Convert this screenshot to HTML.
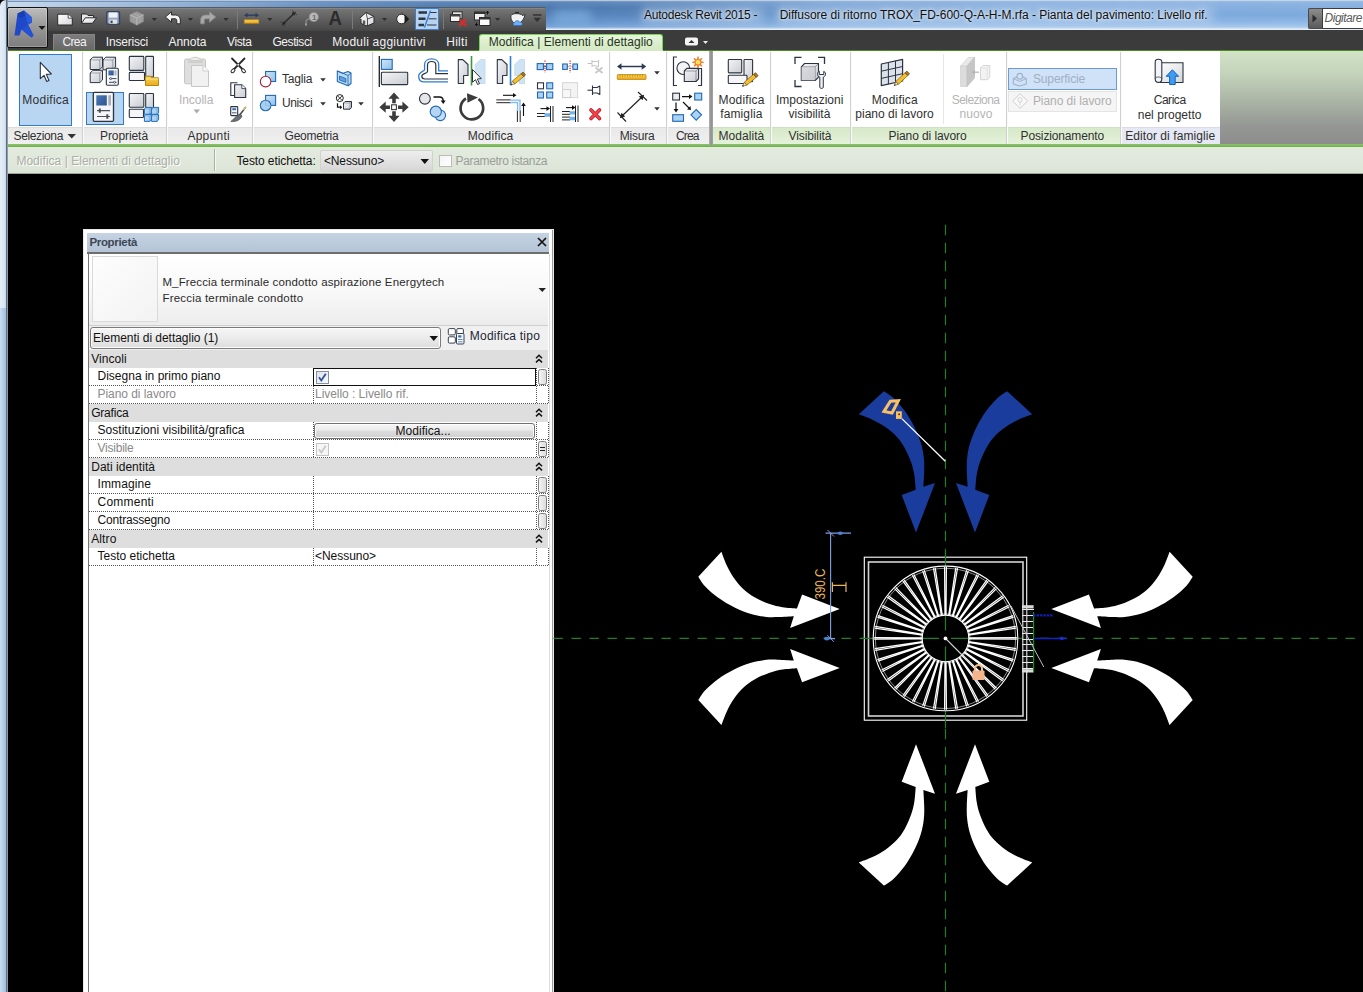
<!DOCTYPE html>
<html lang="it"><head><meta charset="utf-8"><title>Autodesk Revit 2015</title>
<style>
html,body{margin:0;padding:0;background:#000;}
body{width:1363px;height:992px;position:relative;overflow:hidden;font-family:"Liberation Sans",sans-serif;font-size:12px;}
div,span.t,svg.a{position:absolute;box-sizing:border-box;}
span.t{white-space:pre;line-height:16px;height:16px;}
</style></head>
<body>
<div style="left:0px;top:0px;width:1363px;height:31px;background:linear-gradient(180deg,#dde8f3 0,#7c98bd 1.2px,#5c86ba 2.5px,#4d79ae 8px,#5583ba 15px,#6694cb 22px,#7aa6da 27px,#c5daf0 28.7px,#e8f0f8 29.6px,#3b3b3b 30.3px);"></div><div style="left:546px;top:0px;width:817px;height:30.3px;background:linear-gradient(180deg,#dde8f3 0,#9dbbe0 1.2px,#8eb5e3 3px,#7eaadc 15px,#8fb8e6 22px,#a9c9ec 27px,#d5e4f5 28.7px,#e8f0f8 29.6px);-webkit-mask-image:linear-gradient(90deg,rgba(0,0,0,0) 0,rgba(0,0,0,.12) 90px,rgba(0,0,0,.75) 280px,rgba(0,0,0,.95) 480px,#000 100%);mask-image:linear-gradient(90deg,rgba(0,0,0,0) 0,rgba(0,0,0,.12) 90px,rgba(0,0,0,.75) 280px,rgba(0,0,0,.95) 480px,#000 100%);"></div><div style="left:0px;top:1.5px;width:546px;height:6px;background:linear-gradient(90deg,rgba(220,234,248,.85) 0,rgba(200,220,242,.6) 150px,rgba(160,190,225,.25) 330px,rgba(120,160,210,0) 450px);"></div><div style="left:552px;top:10px;width:40px;height:14px;background:rgba(140,190,235,.55);filter:blur(5px);border-radius:8px;"></div><div style="left:640px;top:6px;width:125px;height:19px;background:rgba(225,236,250,.28);filter:blur(5px);border-radius:8px;"></div><div style="left:775px;top:6px;width:440px;height:19px;background:rgba(225,236,250,.28);filter:blur(5px);border-radius:8px;"></div><div style="left:0px;top:0px;width:8px;height:992px;background:linear-gradient(90deg,#c9ddf2 0,#b4cde8 3px,#a6c0dd 5.5px,#5f6f82 6.5px,#8f9aa8 7.5px,#222 8px);"></div><div style="left:0px;top:0px;width:6px;height:308px;background:linear-gradient(90deg,#e4eef8 0,#dbe7f4 4px,#c6d6e8 6px);"></div><svg class="a" style="left:0;top:0" width="10" height="10"><path d="M0 0H6A6 6 0 0 0 0 6Z" fill="#0a0a0a"/></svg><div style="left:8px;top:30px;width:1355px;height:21px;background:#3b3b3b;"></div><div style="left:8px;top:7px;width:538px;height:24px;background:linear-gradient(180deg,#8c8c8c 0,#747474 1.5px,#6a6a6a 6px,#595959 14px,#4c4c4c 21px,#454545 100%);border-radius:0 2px 0 0;border-top:1px solid #565b63;"></div><div style="left:7px;top:7px;width:41px;height:41px;background:linear-gradient(180deg,#bdbdbd 0,#9a9a9a 45%,#7d7d7d 100%);border:1.5px solid #111;border-radius:2px;box-shadow:inset 0 0 0 1px rgba(255,255,255,.25);"></div><svg class="a" style="left:8px;top:8px" width="40" height="40" viewBox="0 0 40 40">
<path d="M9.5 5.5 L16 2.5 L23.5 9 L24 14.5 L20 16.5 L25.5 27.5 L23.5 29.5 L13.5 21.5 L11.5 27.5 L6.5 27.5 Z" fill="#1f49c8"/>
<path d="M9.5 5.500 L16 2.5 L17.500 8 L12 10 Z" fill="#1b3fb0"/>
<path d="M16 2.5 L23.5 9 L24 14.5 L20 16.500 L17.500 8Z" fill="#2a5ae0"/>
<path d="M13.500 21.5 L20 16.500 L25.500 27.5 L23.500 29.5Z" fill="#2352d6"/>
<path d="M30.5 18 L37.5 18 L34 22 Z" fill="#1a1a1a"/>
</svg><div style="left:236.5px;top:10px;width:1px;height:19px;background:#7a7a7a;"></div><div style="left:351.5px;top:10px;width:1px;height:19px;background:#7a7a7a;"></div><div style="left:442.5px;top:10px;width:1px;height:19px;background:#7a7a7a;"></div><div style="left:415px;top:8px;width:24px;height:22px;background:#b7d3f0;border:1px solid #3d7fc8;"></div><div style="left:53px;top:34px;width:42px;height:17px;background:linear-gradient(180deg,#7c7c7c,#666);border:1px solid #858585;border-bottom:none;"></div><span class="t" style="left:62.4px;top:34.0px;font-size:12px;color:#f2f2f2;letter-spacing:-0.60px;">Crea</span><span class="t" style="left:105.8px;top:34.0px;font-size:12px;color:#f2f2f2;letter-spacing:-0.20px;">Inserisci</span><span class="t" style="left:168.4px;top:34.0px;font-size:12px;color:#f2f2f2;letter-spacing:0.01px;">Annota</span><span class="t" style="left:227px;top:34.0px;font-size:12px;color:#f2f2f2;letter-spacing:-0.39px;">Vista</span><span class="t" style="left:272.4px;top:34.0px;font-size:12px;color:#f2f2f2;letter-spacing:-0.41px;">Gestisci</span><span class="t" style="left:332.3px;top:34.0px;font-size:12px;color:#f2f2f2;letter-spacing:0.23px;">Moduli aggiuntivi</span><span class="t" style="left:446.2px;top:34.0px;font-size:12px;color:#f2f2f2;letter-spacing:0.28px;">Hilti</span><div style="left:478.5px;top:33.5px;width:184.5px;height:18px;background:linear-gradient(180deg,#e9f5df 0,#d9ecc9 60%,#d3e9c1 100%);border:1.5px solid #74d653;border-bottom:none;border-radius:3px 3px 0 0;"></div><span class="t" style="left:488.7px;top:34.0px;font-size:12px;color:#26331f;letter-spacing:0.05px;">Modifica | Elementi di dettaglio</span><svg class="a" style="left:684px;top:36px" width="26" height="12"><rect x="1" y="1.5" width="13" height="8" rx="2" fill="#f4f4f4"/><path d="M4.500 7 L7.500 4 L10.500 7Z" fill="#333"/><path d="M19 5 L24 5 L21.500 8Z" fill="#eee"/></svg><div style="left:8px;top:49.5px;width:1355px;height:2px;background:#4c8a22;"></div><div style="left:478.5px;top:49.5px;width:184.5px;height:2px;background:#d3e9c1;"></div><div style="left:8px;top:51px;width:1212px;height:94px;background:#fff;"></div><div style="left:1220px;top:51px;width:143px;height:94px;background:linear-gradient(180deg,#d2e3c8 0,#c3d2ba 25%,#a9b3a4 55%,#949794 80%,#8c8c8c 100%);"></div><div style="left:8px;top:127px;width:701px;height:18px;background:linear-gradient(180deg,#e9e9e9,#f0f0f0);border-top:1px solid #dcdcdc;"></div><div style="left:712.5px;top:127px;width:407px;height:18px;background:linear-gradient(180deg,#d6e9c8,#e6f2dc);border-top:1px solid #cfe0c2;"></div><div style="left:1119.5px;top:127px;width:100.5px;height:18px;background:#e6e8f3;border-top:1px solid #d9dbe8;"></div><div style="left:8px;top:144px;width:1355px;height:2.5px;background:linear-gradient(180deg,#8cc46c,#6fb04a);"></div><div style="left:82px;top:52px;width:1px;height:92px;background:#d0d0d0;"></div><div style="left:83px;top:52px;width:1px;height:92px;background:#fafafa;"></div><div style="left:165.5px;top:52px;width:1px;height:92px;background:#d0d0d0;"></div><div style="left:166.5px;top:52px;width:1px;height:92px;background:#fafafa;"></div><div style="left:252px;top:52px;width:1px;height:92px;background:#d0d0d0;"></div><div style="left:253px;top:52px;width:1px;height:92px;background:#fafafa;"></div><div style="left:371.5px;top:52px;width:1px;height:92px;background:#d0d0d0;"></div><div style="left:372.5px;top:52px;width:1px;height:92px;background:#fafafa;"></div><div style="left:609px;top:52px;width:1px;height:92px;background:#d0d0d0;"></div><div style="left:610px;top:52px;width:1px;height:92px;background:#fafafa;"></div><div style="left:665.5px;top:52px;width:1px;height:92px;background:#d0d0d0;"></div><div style="left:666.5px;top:52px;width:1px;height:92px;background:#fafafa;"></div><div style="left:770px;top:52px;width:1px;height:92px;background:#d0d0d0;"></div><div style="left:771px;top:52px;width:1px;height:92px;background:#fafafa;"></div><div style="left:849.5px;top:52px;width:1px;height:92px;background:#d0d0d0;"></div><div style="left:850.5px;top:52px;width:1px;height:92px;background:#fafafa;"></div><div style="left:1005.5px;top:52px;width:1px;height:92px;background:#d0d0d0;"></div><div style="left:1006.5px;top:52px;width:1px;height:92px;background:#fafafa;"></div><div style="left:1119.5px;top:52px;width:1px;height:92px;background:#d0d0d0;"></div><div style="left:1120.5px;top:52px;width:1px;height:92px;background:#fafafa;"></div><div style="left:942.5px;top:54px;width:1px;height:70px;background:#e6e6e6;"></div><div style="left:709px;top:51px;width:3.5px;height:94px;background:linear-gradient(90deg,#b5b5b5,#8f8f8f 50%,#a5a5a5);"></div><div style="left:19px;top:54px;width:53px;height:71.5px;background:#b8d5f2;border:1px solid #2f7acb;"></div><span class="t" style="left:22.3px;top:92.0px;font-size:12px;color:#303030;letter-spacing:0.25px;">Modifica</span><span class="t" style="left:13.5px;top:127.8px;font-size:12px;color:#303030;letter-spacing:-0.36px;">Seleziona</span><svg class="a" style="left:66px;top:132px" width="12" height="8"><path d="M1.5 2 L10 2 L5.700 6.500Z" fill="#333"/></svg><span class="t" style="left:100px;top:127.8px;font-size:12px;color:#303030;letter-spacing:-0.08px;">Proprietà</span><span class="t" style="left:187.4px;top:127.8px;font-size:12px;color:#303030;letter-spacing:0.26px;">Appunti</span><span class="t" style="left:284.6px;top:127.8px;font-size:12px;color:#303030;letter-spacing:-0.25px;">Geometria</span><span class="t" style="left:467.7px;top:127.8px;font-size:12px;color:#303030;letter-spacing:0.13px;">Modifica</span><span class="t" style="left:619.8px;top:127.8px;font-size:12px;color:#303030;letter-spacing:-0.24px;">Misura</span><span class="t" style="left:675.9px;top:127.8px;font-size:12px;color:#303030;letter-spacing:-0.83px;">Crea</span><span class="t" style="left:718.5px;top:127.8px;font-size:12px;color:#303030;letter-spacing:0.06px;">Modalità</span><span class="t" style="left:788.6px;top:127.8px;font-size:12px;color:#303030;letter-spacing:-0.12px;">Visibilità</span><span class="t" style="left:888.5px;top:127.8px;font-size:12px;color:#303030;letter-spacing:-0.09px;">Piano di lavoro</span><span class="t" style="left:1020.6px;top:127.8px;font-size:12px;color:#303030;letter-spacing:-0.14px;">Posizionamento</span><span class="t" style="left:1125.2px;top:127.8px;font-size:12px;color:#303030;letter-spacing:0.07px;">Editor di famiglie</span><div style="left:86px;top:91.5px;width:38px;height:33.5px;background:#b8d5f2;border:1px solid #2f7acb;"></div><span class="t" style="left:178.9px;top:92.0px;font-size:12px;color:#b4b4b4;letter-spacing:-0.04px;">Incolla</span><svg class="a" style="left:192px;top:108px" width="10" height="7"><path d="M1.500 1.500 L8 1.500 L4.700 5.500Z" fill="#aaa"/></svg><span class="t" style="left:281.9px;top:71.0px;font-size:12px;color:#303030;letter-spacing:-0.18px;">Taglia</span><span class="t" style="left:281.9px;top:94.8px;font-size:12px;color:#303030;letter-spacing:-0.40px;">Unisci</span><svg class="a" style="left:319.3px;top:77.0px" width="8" height="6"><path d="M1.200 1.200 L6.800 1.200 L4 4.500Z" fill="#333"/></svg><svg class="a" style="left:319.3px;top:100.5px" width="8" height="6"><path d="M1.200 1.200 L6.800 1.200 L4 4.500Z" fill="#333"/></svg><svg class="a" style="left:357.4px;top:100.5px" width="8" height="6"><path d="M1.200 1.200 L6.800 1.200 L4 4.500Z" fill="#333"/></svg><svg class="a" style="left:652.8px;top:70.0px" width="8" height="6"><path d="M1.200 1.200 L6.800 1.200 L4 4.500Z" fill="#333"/></svg><svg class="a" style="left:652.8px;top:106.0px" width="8" height="6"><path d="M1.200 1.200 L6.800 1.200 L4 4.500Z" fill="#333"/></svg><span class="t" style="left:718.5px;top:91.5px;font-size:12px;color:#303030;letter-spacing:0.18px;">Modifica</span><span class="t" style="left:720.2px;top:106.3px;font-size:12px;color:#303030;letter-spacing:0.12px;">famiglia</span><span class="t" style="left:776px;top:91.5px;font-size:12px;color:#303030;">Impostazioni</span><span class="t" style="left:788.6px;top:106.3px;font-size:12px;color:#303030;letter-spacing:-0.03px;">visibilità</span><span class="t" style="left:871.7px;top:91.5px;font-size:12px;color:#303030;letter-spacing:0.19px;">Modifica</span><span class="t" style="left:855.3px;top:106.3px;font-size:12px;color:#303030;letter-spacing:0.02px;">piano di lavoro</span><span class="t" style="left:951.8px;top:91.5px;font-size:12px;color:#b4b4b4;letter-spacing:-0.57px;">Seleziona</span><span class="t" style="left:959.6px;top:106.3px;font-size:12px;color:#b4b4b4;letter-spacing:0.02px;">nuovo</span><div style="left:1008px;top:68px;width:109px;height:22px;background:#cfe2f8;border:1px solid #6a9bd8;"></div><div style="left:1008px;top:91px;width:109px;height:21px;background:#f5f5f5;border:1px solid #e4e4e4;"></div><span class="t" style="left:1032.9px;top:70.7px;font-size:12px;color:#9fb0c4;letter-spacing:-0.11px;">Superficie</span><span class="t" style="left:1032.9px;top:93.0px;font-size:12px;color:#b0b0b0;letter-spacing:-0.05px;">Piano di lavoro</span><span class="t" style="left:1153.7px;top:92.0px;font-size:12px;color:#303030;letter-spacing:-0.46px;">Carica</span><span class="t" style="left:1137.7px;top:106.6px;font-size:12px;color:#303030;letter-spacing:0.04px;">nel progetto</span><div style="left:8px;top:146.5px;width:1355px;height:27px;background:linear-gradient(180deg,#e3eade 0,#dde5d8 100%);border-bottom:1px solid #9aa595;"></div><span class="t" style="left:16.4px;top:152.8px;font-size:12px;color:#a9aea6;letter-spacing:0.03px;text-shadow:1px 1px 0 #fff;">Modifica | Elementi di dettaglio</span><div style="left:214px;top:149px;width:1px;height:22px;background:#a9b0a5;"></div><div style="left:215px;top:149px;width:1px;height:22px;background:#f6f8f4;"></div><span class="t" style="left:236.4px;top:152.6px;font-size:12px;color:#111;letter-spacing:-0.09px;">Testo etichetta:</span><div style="left:319.5px;top:149.5px;width:113px;height:22.5px;background:linear-gradient(180deg,#eeeeee,#e0e0e0 60%,#d6d6d6);border:1px solid #cfd3cc;border-radius:2px;"></div><span class="t" style="left:324px;top:152.6px;font-size:12px;color:#111;letter-spacing:-0.15px;">&lt;Nessuno&gt;</span><svg class="a" style="left:419.500px;top:157.5px" width="10" height="7"><path d="M0.500 1 L9 1 L4.750 6Z" fill="#111"/></svg><div style="left:439px;top:154.5px;width:12.5px;height:12.5px;background:linear-gradient(135deg,#f4f4f4,#fff);border:1px solid #b9bdb6;"></div><span class="t" style="left:455.6px;top:152.6px;font-size:12px;color:#9a9f97;letter-spacing:-0.34px;">Parametro istanza</span><span class="t" style="left:643.9px;top:6.6px;font-size:12px;color:#101010;letter-spacing:-0.22px;text-shadow:0 0 6px rgba(255,255,255,.9),0 0 3px rgba(255,255,255,.7);">Autodesk Revit 2015 -</span><span class="t" style="left:779.7px;top:6.6px;font-size:12px;color:#101010;letter-spacing:-0.03px;text-shadow:0 0 6px rgba(255,255,255,.9),0 0 3px rgba(255,255,255,.7);">Diffusore di ritorno TROX_FD-600-Q-A-H-M.rfa - Pianta del pavimento: Livello rif.</span><div style="left:1307.5px;top:8px;width:14px;height:21px;background:linear-gradient(180deg,#8c8c8c,#5a5a5a);border:1px solid #4a4a4a;border-right:none;border-radius:2px 0 0 2px;"></div><svg class="a" style="left:1311px;top:13px" width="8" height="11"><path d="M1.500 1.500 L6 5.500 L1.500 9.500Z" fill="#2a2a2a"/></svg><div style="left:1321.5px;top:8px;width:45px;height:21px;background:#fff;border:1px solid #3c3c3c;"></div><span class="t" style="left:1324.6px;top:10.2px;font-size:12px;color:#5a5a5a;letter-spacing:-0.52px;font-style:italic;">Digitare</span><div style="left:8px;top:173.5px;width:1355px;height:819px;background:#000;"></div><div style="left:82.5px;top:229px;width:471.5px;height:770px;background:#fff;border:1px solid #e8e8e8;box-shadow:inset -1px 0 0 #9a9a9a;"></div><div style="left:86.5px;top:233px;width:462.5px;height:19.5px;background:linear-gradient(180deg,#c5d3e2 0,#bccbdc 50%,#b3c4d6 100%);"></div><div style="left:86.5px;top:252px;width:462.5px;height:1.5px;background:#6e6e6e;"></div><div style="left:87.7px;top:253px;width:1.4px;height:740px;background:#767676;"></div><div style="left:548.5px;top:253.5px;width:1px;height:740px;background:#dcdcdc;"></div><span class="t" style="left:89.4px;top:234.0px;font-size:11.5px;color:#3b4756;letter-spacing:-0.32px;font-weight:bold;">Proprietà</span><svg class="a" style="left:536px;top:236px" width="12" height="12"><path d="M2 2 L10 10 M10 2 L2 10" stroke="#111" stroke-width="1.700" fill="none"/></svg><div style="left:89.1px;top:253.5px;width:459.4px;height:72px;background:linear-gradient(180deg,#ffffff 0,#f7f7f7 60%,#ececec 100%);border-bottom:1px solid #cfcfcf;"></div><div style="left:92px;top:256px;width:66px;height:65.5px;background:linear-gradient(135deg,#fdfdfd,#f3f3f3);border:1px solid #dadada;"></div><span class="t" style="left:162.4px;top:273.9px;font-size:11.5px;color:#2a2a2a;letter-spacing:0.14px;">M_Freccia terminale condotto aspirazione Energytech</span><span class="t" style="left:162.4px;top:290.0px;font-size:11.5px;color:#2a2a2a;letter-spacing:0.21px;">Freccia terminale condotto</span><svg class="a" style="left:538px;top:287px" width="9" height="6"><path d="M0.500 1 L8 1 L4.250 5Z" fill="#222"/></svg><div style="left:89.1px;top:325.5px;width:459.4px;height:24.5px;background:#f0f0f0;"></div><div style="left:89.6px;top:326.5px;width:351.9px;height:22px;background:linear-gradient(180deg,#f6f6f6 0,#ebebeb 50%,#dcdcdc 100%);border:1px solid #7a7a7a;border-radius:3px;box-shadow:inset 0 0 0 1px #fcfcfc;"></div><span class="t" style="left:93px;top:329.8px;font-size:12px;color:#111;letter-spacing:-0.03px;">Elementi di dettaglio (1)</span><svg class="a" style="left:429px;top:335px" width="10" height="7"><path d="M0.500 1 L9 1 L4.750 6Z" fill="#111"/></svg><span class="t" style="left:469.8px;top:327.8px;font-size:12px;color:#1d2733;letter-spacing:0.22px;">Modifica tipo</span><div style="left:89.1px;top:350px;width:459.4px;height:17.5px;background:#dedede;"></div><span class="t" style="left:91.2px;top:350.8px;font-size:12px;color:#111;letter-spacing:0.04px;">Vincoli</span><svg class="a" style="left:535px;top:353.5px" width="8" height="10"><path d="M1 4.200 L4 1.300 L7 4.200 M1 8.400 L4 5.500 L7 8.400" stroke="#111" stroke-width="1.500" fill="none"/></svg><div style="left:89.1px;top:385px;width:459.4px;height:1px;background-image:linear-gradient(90deg,#555 1px,transparent 1px);background-size:2px 1px;"></div><div style="left:312.5px;top:368px;width:1px;height:17.5px;background-image:linear-gradient(180deg,#555 1px,transparent 1px);background-size:1px 2px;"></div><div style="left:535.5px;top:368px;width:1px;height:17.5px;background-image:linear-gradient(180deg,#555 1px,transparent 1px);background-size:1px 2px;"></div><div style="left:547.5px;top:368px;width:1px;height:17.5px;background-image:linear-gradient(180deg,#555 1px,transparent 1px);background-size:1px 2px;"></div><span class="t" style="left:97.5px;top:368.3px;font-size:12px;color:#111;letter-spacing:0.01px;">Disegna in primo piano</span><div style="left:537.5px;top:369.2px;width:9px;height:15.5px;background:linear-gradient(90deg,#f4f4f4,#dcdcdc);border:1px solid #7d7d7d;border-radius:2.5px;"></div><div style="left:89.1px;top:403px;width:459.4px;height:1px;background-image:linear-gradient(90deg,#555 1px,transparent 1px);background-size:2px 1px;"></div><div style="left:312.5px;top:386px;width:1px;height:17.5px;background-image:linear-gradient(180deg,#555 1px,transparent 1px);background-size:1px 2px;"></div><div style="left:535.5px;top:386px;width:1px;height:17.5px;background-image:linear-gradient(180deg,#555 1px,transparent 1px);background-size:1px 2px;"></div><div style="left:547.5px;top:386px;width:1px;height:17.5px;background-image:linear-gradient(180deg,#555 1px,transparent 1px);background-size:1px 2px;"></div><span class="t" style="left:97.5px;top:386.3px;font-size:12px;color:#8a8a8a;letter-spacing:-0.06px;">Piano di lavoro</span><div style="left:89.1px;top:404px;width:459.4px;height:17.5px;background:#dedede;"></div><span class="t" style="left:91.2px;top:404.8px;font-size:12px;color:#111;letter-spacing:-0.20px;">Grafica</span><svg class="a" style="left:535px;top:407.5px" width="8" height="10"><path d="M1 4.200 L4 1.300 L7 4.200 M1 8.400 L4 5.500 L7 8.400" stroke="#111" stroke-width="1.500" fill="none"/></svg><div style="left:89.1px;top:439px;width:459.4px;height:1px;background-image:linear-gradient(90deg,#555 1px,transparent 1px);background-size:2px 1px;"></div><div style="left:312.5px;top:422px;width:1px;height:17.5px;background-image:linear-gradient(180deg,#555 1px,transparent 1px);background-size:1px 2px;"></div><div style="left:535.5px;top:422px;width:1px;height:17.5px;background-image:linear-gradient(180deg,#555 1px,transparent 1px);background-size:1px 2px;"></div><div style="left:547.5px;top:422px;width:1px;height:17.5px;background-image:linear-gradient(180deg,#555 1px,transparent 1px);background-size:1px 2px;"></div><span class="t" style="left:97.5px;top:422.3px;font-size:12px;color:#111;letter-spacing:0.03px;">Sostituzioni visibilità/grafica</span><div style="left:89.1px;top:457px;width:459.4px;height:1px;background-image:linear-gradient(90deg,#555 1px,transparent 1px);background-size:2px 1px;"></div><div style="left:312.5px;top:440px;width:1px;height:17.5px;background-image:linear-gradient(180deg,#555 1px,transparent 1px);background-size:1px 2px;"></div><div style="left:535.5px;top:440px;width:1px;height:17.5px;background-image:linear-gradient(180deg,#555 1px,transparent 1px);background-size:1px 2px;"></div><div style="left:547.5px;top:440px;width:1px;height:17.5px;background-image:linear-gradient(180deg,#555 1px,transparent 1px);background-size:1px 2px;"></div><span class="t" style="left:97.5px;top:440.3px;font-size:12px;color:#8a8a8a;letter-spacing:-0.23px;">Visibile</span><div style="left:537.5px;top:441.2px;width:9px;height:15.5px;background:linear-gradient(90deg,#f4f4f4,#dcdcdc);border:1px solid #7d7d7d;border-radius:2.5px;"></div><div style="left:539.5px;top:446.5px;width:5px;height:1.2px;background:#222;"></div><div style="left:539.5px;top:450px;width:5px;height:1.2px;background:#222;"></div><div style="left:89.1px;top:458px;width:459.4px;height:17.5px;background:#dedede;"></div><span class="t" style="left:91.2px;top:458.8px;font-size:12px;color:#111;letter-spacing:0.03px;">Dati identità</span><svg class="a" style="left:535px;top:461.5px" width="8" height="10"><path d="M1 4.200 L4 1.300 L7 4.200 M1 8.400 L4 5.500 L7 8.400" stroke="#111" stroke-width="1.500" fill="none"/></svg><div style="left:89.1px;top:493px;width:459.4px;height:1px;background-image:linear-gradient(90deg,#555 1px,transparent 1px);background-size:2px 1px;"></div><div style="left:312.5px;top:476px;width:1px;height:17.5px;background-image:linear-gradient(180deg,#555 1px,transparent 1px);background-size:1px 2px;"></div><div style="left:535.5px;top:476px;width:1px;height:17.5px;background-image:linear-gradient(180deg,#555 1px,transparent 1px);background-size:1px 2px;"></div><div style="left:547.5px;top:476px;width:1px;height:17.5px;background-image:linear-gradient(180deg,#555 1px,transparent 1px);background-size:1px 2px;"></div><span class="t" style="left:97.5px;top:476.3px;font-size:12px;color:#111;letter-spacing:0.10px;">Immagine</span><div style="left:537.5px;top:477.2px;width:9px;height:15.5px;background:linear-gradient(90deg,#f4f4f4,#dcdcdc);border:1px solid #7d7d7d;border-radius:2.5px;"></div><div style="left:89.1px;top:511px;width:459.4px;height:1px;background-image:linear-gradient(90deg,#555 1px,transparent 1px);background-size:2px 1px;"></div><div style="left:312.5px;top:494px;width:1px;height:17.5px;background-image:linear-gradient(180deg,#555 1px,transparent 1px);background-size:1px 2px;"></div><div style="left:535.5px;top:494px;width:1px;height:17.5px;background-image:linear-gradient(180deg,#555 1px,transparent 1px);background-size:1px 2px;"></div><div style="left:547.5px;top:494px;width:1px;height:17.5px;background-image:linear-gradient(180deg,#555 1px,transparent 1px);background-size:1px 2px;"></div><span class="t" style="left:97.5px;top:494.3px;font-size:12px;color:#111;letter-spacing:0.23px;">Commenti</span><div style="left:537.5px;top:495.2px;width:9px;height:15.5px;background:linear-gradient(90deg,#f4f4f4,#dcdcdc);border:1px solid #7d7d7d;border-radius:2.5px;"></div><div style="left:89.1px;top:529px;width:459.4px;height:1px;background-image:linear-gradient(90deg,#555 1px,transparent 1px);background-size:2px 1px;"></div><div style="left:312.5px;top:512px;width:1px;height:17.5px;background-image:linear-gradient(180deg,#555 1px,transparent 1px);background-size:1px 2px;"></div><div style="left:535.5px;top:512px;width:1px;height:17.5px;background-image:linear-gradient(180deg,#555 1px,transparent 1px);background-size:1px 2px;"></div><div style="left:547.5px;top:512px;width:1px;height:17.5px;background-image:linear-gradient(180deg,#555 1px,transparent 1px);background-size:1px 2px;"></div><span class="t" style="left:97.5px;top:512.3px;font-size:12px;color:#111;letter-spacing:-0.18px;">Contrassegno</span><div style="left:537.5px;top:513.2px;width:9px;height:15.5px;background:linear-gradient(90deg,#f4f4f4,#dcdcdc);border:1px solid #7d7d7d;border-radius:2.5px;"></div><div style="left:89.1px;top:530px;width:459.4px;height:17.5px;background:#dedede;"></div><span class="t" style="left:91.2px;top:530.8px;font-size:12px;color:#111;letter-spacing:0.12px;">Altro</span><svg class="a" style="left:535px;top:533.5px" width="8" height="10"><path d="M1 4.200 L4 1.300 L7 4.200 M1 8.400 L4 5.500 L7 8.400" stroke="#111" stroke-width="1.500" fill="none"/></svg><div style="left:89.1px;top:565px;width:459.4px;height:1px;background-image:linear-gradient(90deg,#555 1px,transparent 1px);background-size:2px 1px;"></div><div style="left:312.5px;top:548px;width:1px;height:17.5px;background-image:linear-gradient(180deg,#555 1px,transparent 1px);background-size:1px 2px;"></div><div style="left:535.5px;top:548px;width:1px;height:17.5px;background-image:linear-gradient(180deg,#555 1px,transparent 1px);background-size:1px 2px;"></div><div style="left:547.5px;top:548px;width:1px;height:17.5px;background-image:linear-gradient(180deg,#555 1px,transparent 1px);background-size:1px 2px;"></div><span class="t" style="left:97.5px;top:548.3px;font-size:12px;color:#111;letter-spacing:0.01px;">Testo etichetta</span><div style="left:312.5px;top:368px;width:223px;height:17.5px;background:#fff;border:1.5px solid #111;"></div><div style="left:316.2px;top:371px;width:12.5px;height:12.5px;background:linear-gradient(135deg,#dfe3ea,#f8f9fb);border:1px solid #8591a3;"></div><svg class="a" style="left:316.2px;top:371px" width="13" height="13"><path d="M3 6.300 L5.300 9.500 L9.800 2.800" stroke="#2c4f9e" stroke-width="1.800" fill="none"/></svg><div style="left:316.2px;top:443.3px;width:12.5px;height:12.5px;background:#f6f6f6;border:1px solid #c4c4c4;"></div><svg class="a" style="left:316.2px;top:443.3px" width="13" height="13"><path d="M3 6.300 L5.300 9.500 L9.800 2.800" stroke="#c9c9c9" stroke-width="1.800" fill="none"/></svg><span class="t" style="left:315px;top:386.2px;font-size:12px;color:#8a8a8a;letter-spacing:-0.04px;">Livello : Livello rif.</span><div style="left:314px;top:422.8px;width:220.5px;height:15.8px;background:linear-gradient(180deg,#f5f5f5 0,#ebebeb 45%,#dcdcdc 50%,#d0d0d0 100%);border:1px solid #707070;border-radius:3px;box-shadow:inset 0 0 0 1px #fbfbfb;"></div><span class="t" style="left:395.4px;top:422.6px;font-size:12px;color:#111;letter-spacing:0.06px;">Modifica...</span><span class="t" style="left:315px;top:548.3px;font-size:12px;color:#111;letter-spacing:-0.04px;">&lt;Nessuno&gt;</span><svg class="a" style="left:446px;top:326px" width="20" height="20" viewBox="446 326 20 20"><rect x="448.300" y="328.6" width="7" height="6.300" rx="1.200" fill="#fff" stroke="#39424f" stroke-width="1"/><rect x="448.300" y="336.8" width="7" height="6.300" rx="1.200" fill="#fff" stroke="#39424f" stroke-width="1"/><rect x="456.800" y="328.6" width="6.600" height="6.300" rx="1.200" fill="#fff" stroke="#39424f" stroke-width="1"/><rect x="456.500" y="333.5" width="7.500" height="10.500" rx="1" fill="#f4f7fb" stroke="#39424f" stroke-width="1"/><rect x="458.200" y="335.3" width="3.200" height="2.200" fill="#3f6db0"/><path d="M458 339.500H462.500M458 341.800H462.500" stroke="#3f6db0" stroke-width=".8"/></svg><svg class="a" style="left:0;top:0" width="1363" height="150" viewBox="0 0 1363 150"><defs>
<linearGradient id="gW" x1="0" y1="0" x2="1" y2="1"><stop offset="0" stop-color="#ffffff"/><stop offset="1" stop-color="#d4d6da"/></linearGradient>
<linearGradient id="gG" x1="0" y1="0" x2="1" y2="1"><stop offset="0" stop-color="#f4f5f7"/><stop offset="1" stop-color="#c9ccd2"/></linearGradient>
<linearGradient id="gB" x1="0" y1="0" x2="1" y2="1"><stop offset="0" stop-color="#cfe5f8"/><stop offset="1" stop-color="#8fc1ea"/></linearGradient>
<linearGradient id="gY" x1="0" y1="0" x2="0" y2="1"><stop offset="0" stop-color="#fbd65a"/><stop offset="1" stop-color="#e9a91c"/></linearGradient>
<linearGradient id="gD" x1="0" y1="0" x2="1" y2="1"><stop offset="0" stop-color="#4d78b4"/><stop offset="1" stop-color="#2b5594"/></linearGradient>
</defs><path d="M57.700 14.2H68.200L72.300 18.200V25H57.700Z" fill="url(#gW)" stroke="#2a2a2a" stroke-width="1"/><path d="M68.200 14.2V18.200H72.300" fill="#fff" stroke="#2a2a2a" stroke-width=".8"/><path d="M81.500 23.2V14H86.500L88 15.500H93.500V18" fill="#e9e9e9" stroke="#2a2a2a" stroke-width="1"/><path d="M81.500 23.300L85.300 17.800H96.500L92.500 23.300Z" fill="url(#gW)" stroke="#2a2a2a" stroke-width="1"/><rect x="106.800" y="11.7" width="12.700" height="12.400" rx="1" fill="#9aa7bd" stroke="#35425c" stroke-width="1.400"/><rect x="108.800" y="12.4" width="8.700" height="5.200" fill="#eef2f8"/><rect x="109.500" y="19.6" width="7.400" height="4.200" fill="#e2e4e8"/><rect x="110.600" y="20.6" width="2" height="2.600" fill="#35425c"/><path d="M136.800 11.500L143.500 14.800V21.500L136.800 25L130 21.500V14.800Z" fill="#9c9c9c" stroke="#8a8a8a" stroke-width=".8"/><path d="M130 14.800L136.800 18L143.500 14.800M136.800 18V25" stroke="#b9b9b9" stroke-width="1" fill="none"/><path d="M133.400 13.200L140 16.500V23.200" stroke="#b0b0b0" stroke-width=".7" fill="none"/><path d="M151.8 17.900000000000002H157.0L154.4 21.1Z" fill="#2e2e2e"/><path d="M165.300 17L171.500 11.800V15H175.500C178.700 15 180.300 17.300 180.300 20V23.800H176.800V20.500C176.800 19.300 176.200 18.800 175 18.800H171.500V22.200Z" fill="#f4f4f4" stroke="#2a2a2a" stroke-width="1" stroke-linejoin="round"/><path d="M187.8 17.900000000000002H193.0L190.4 21.1Z" fill="#2e2e2e"/><path d="M215.700 17L209.500 11.800V15H205.500C202.300 15 200.700 17.300 200.700 20V23.800H204.200V20.500C204.200 19.300 204.800 18.800 206 18.800H209.500V22.200Z" fill="#a9a9a9" stroke="#8b8b8b" stroke-width=".9" stroke-linejoin="round"/><path d="M223.4 17.900000000000002H228.6L226 21.1Z" fill="#2e2e2e"/><path d="M246.500 15.200H256.500" stroke="#2c3e5e" stroke-width="1.400"/><path d="M244 15.200L247.500 12.800V17.600ZM259 15.200L255.500 12.800V17.600Z" fill="#2c3e5e"/><rect x="244.300" y="19.8" width="14.500" height="3.400" fill="url(#gY)" stroke="#c88a10" stroke-width=".7"/><path d="M267.2 17.900000000000002H272.40000000000003L269.8 21.1Z" fill="#2e2e2e"/><path d="M283 24L294.500 13" stroke="#262626" stroke-width="1.300"/><path d="M281.500 25.500L283.200 21.200L286 24ZM296 11.500L294.300 15.800L291.500 13Z" fill="#262626"/><path d="M280.500 21.500L285 26.500M292 10.500L297 15" stroke="#3a3a3a" stroke-width="1"/><circle cx="313.800" cy="17" r="4.600" fill="#b8b8b8" stroke="#8e8e8e" stroke-width=".8"/><path d="M306 24.500V20.500L309.500 18.500" stroke="#9a9a9a" stroke-width="1" fill="none"/><rect x="305" y="23.500" width="2" height="2" fill="#9a9a9a"/><text x="311.900" y="20" font-family="Liberation Sans, sans-serif" font-size="8" font-weight="bold" fill="#6a6a6a">1</text><text x="328.500" y="25.2" font-family="Liberation Sans, sans-serif" font-size="19.500" font-weight="bold" fill="#2b2b2b" textLength="13.500" lengthAdjust="spacingAndGlyphs">A</text><path d="M359.500 18.500L366 12.500L374 16.500V23L367 26L361 23.500V18.800" fill="url(#gW)" stroke="#2a2a2a" stroke-width="1" stroke-linejoin="round"/><path d="M366 12.500L367.500 19L374 16.500M367.500 19V26" stroke="#2a2a2a" stroke-width=".8" fill="none"/><rect x="362.800" y="20.5" width="2.400" height="3.800" fill="#555"/><path d="M381.9 17.900000000000002H387.1L384.5 21.1Z" fill="#2e2e2e"/><path d="M402 12V26" stroke="#5a4a3a" stroke-width="1"/><circle cx="401.500" cy="19" r="4.800" fill="#f6f6f6" stroke="#2a2a2a" stroke-width="1"/><path d="M404.500 14.300L409.200 19L404.500 23.700Z" fill="#1a1a1a"/><path d="M418.500 12.500H427M418.500 18.800H425.500M418.500 25H424" stroke="#2a3548" stroke-width="2.400"/><path d="M430 12.500H436.500M428.500 18.800H436.500M427 25H436.500" stroke="#2a3548" stroke-width="1"/><path d="M430.500 10.500L424.500 27.500" stroke="#3d7fc8" stroke-width="1.400"/><rect x="452.500" y="11.8" width="9.500" height="7" fill="#e8e8e8" stroke="#2a2a2a" stroke-width="1"/><rect x="450.500" y="14.5" width="9.500" height="7" fill="#f6f6f6" stroke="#2a2a2a" stroke-width="1"/><rect x="450.500" y="14.500" width="9.500" height="2" fill="#444"/><path d="M459.500 19.500L466 26M466 19.500L459.500 26" stroke="#e02828" stroke-width="2.200"/><rect x="474.500" y="12" width="10.500" height="8" fill="#f0f0f0" stroke="#2a2a2a" stroke-width="1"/><rect x="474.500" y="12" width="10.500" height="2" fill="#333"/><rect x="479.500" y="17.5" width="10.500" height="8" fill="#fafafa" stroke="#2a2a2a" stroke-width="1"/><rect x="479.500" y="17.500" width="10.500" height="2" fill="#333"/><path d="M487.500 14.500V11.500M486 13L487.500 11.200L489 13M476.500 22.500V25.500M475 24L476.500 25.800L478 24" stroke="#111" stroke-width="1" fill="none"/><path d="M495.0 17.900000000000002H500.20000000000005L497.6 21.1Z" fill="#2e2e2e"/><path d="M511 15.500C512 13 521 13 522.500 15.500L525 14.500C524.500 18 522.500 21 520.500 22.500H513.500C511.500 21 510.500 18 511 15.500Z" fill="#f2f2f2" stroke="#2a2a2a" stroke-width=".9"/><path d="M515 12.500H519" stroke="#2a2a2a" stroke-width="1.200"/><path d="M514.500 25.500C513 25.500 512.500 23 514.500 22.500C515 20.500 518.500 20 519.500 22C522 21.500 523.500 24.500 521 25.500Z" fill="#6fb0ee" stroke="#2d6fc0" stroke-width=".8"/><path d="M533 15H541.500" stroke="#303030" stroke-width="1.400"/><path d="M533.500 17.800H541L537.200 22Z" fill="#303030"/><path d="M40.300 62.3V78.600L44 75.300L46.700 81.500L49 80.500L46.300 74.400L51.400 74Z" fill="#fff" stroke="#2b3440" stroke-width="1.100" stroke-linejoin="round"/><path d="M90.2 59.906000000000006L92.906 57.2H102.5V66.794L99.794 69.5H90.2Z" fill="url(#gG)" stroke="#2b3440" stroke-width="1.0" stroke-linejoin="round"/><path d="M90.2 59.906000000000006H99.794V69.5M99.794 59.906000000000006L102.5 57.2" fill="none" stroke="#2b3440" stroke-width="0.7" opacity=".55"/><path d="M103 59.972L105.772 57.2H115.6V67.02799999999999L112.82799999999999 69.8H103Z" fill="url(#gG)" stroke="#2b3440" stroke-width="1.0" stroke-linejoin="round"/><path d="M103 59.972H112.82799999999999V69.8M112.82799999999999 59.972L115.6 57.2" fill="none" stroke="#2b3440" stroke-width="0.7" opacity=".55"/><path d="M90.2 73.006L92.906 70.3H102.5V79.89399999999999L99.794 82.6H90.2Z" fill="url(#gG)" stroke="#2b3440" stroke-width="1.0" stroke-linejoin="round"/><path d="M90.2 73.006H99.794V82.6M99.794 73.006L102.5 70.3" fill="none" stroke="#2b3440" stroke-width="0.7" opacity=".55"/><rect x="106.300" y="68.3" width="12" height="17" rx="1.200" fill="#f6f8fb" stroke="#2b3440" stroke-width="1.100"/><rect x="108.400" y="70.4" width="5.300" height="5" fill="url(#gD)"/><rect x="114.500" y="70.4" width="2" height="5" fill="#aeb3bd"/><path d="M109 78.600H116.500M109 82.300H116.500" stroke="#2b3440" stroke-width=".9"/><circle cx="110.700" cy="78.6" r="1" fill="#fff" stroke="#2b3440" stroke-width=".7"/><circle cx="114.500" cy="82.3" r="1" fill="#fff" stroke="#2b3440" stroke-width=".7"/><rect x="145.7" y="56.4" width="7.8" height="20.6" rx="0.8" fill="url(#gG)" stroke="#2b3440" stroke-width="1.1"/><rect x="129.3" y="56.4" width="14.5" height="14.0" rx="0.8" fill="url(#gG)" stroke="#2b3440" stroke-width="1.1"/><rect x="129.3" y="72.4" width="15.2" height="8.1" rx="0.8" fill="#f6f6f8" stroke="#2b3440" stroke-width="1.1"/><path d="M145.500 76.200H150.500L151.800 77.800H158.500V85.500H145.500Z" fill="url(#gY)" stroke="#b7860f" stroke-width="1"/><path d="M145.500 79H158.500" stroke="#fbe08a" stroke-width="1"/><rect x="93.300" y="92.4" width="20.200" height="28.900" rx="1" fill="#f4f6fa" stroke="#2b3440" stroke-width="1.300"/><rect x="96.300" y="95.3" width="10.500" height="10.200" fill="url(#gD)"/><rect x="108.300" y="95.3" width="2.700" height="10.200" fill="#a9aeb9"/><path d="M97 110.600H110M97 116.500H110" stroke="#4a4f58" stroke-width="1.100"/><path d="M99.800 108.400V112.800M107.300 114.300V118.700" stroke="#4a4f58" stroke-width="2"/><rect x="145.7" y="93.5" width="7.8" height="14.5" rx="0.8" fill="url(#gG)" stroke="#2b3440" stroke-width="1.1"/><rect x="129.3" y="93.5" width="14.5" height="13.7" rx="0.8" fill="url(#gG)" stroke="#2b3440" stroke-width="1.1"/><rect x="129.3" y="109.2" width="14.2" height="8.3" rx="0.8" fill="#f6f6f8" stroke="#2b3440" stroke-width="1.1"/><path d="M144.4 108.94000000000001L145.94 107.4H151.4V112.86L149.86 114.4H144.4Z" fill="url(#gB)" stroke="#1f6fbe" stroke-width="1.0" stroke-linejoin="round"/><path d="M144.4 108.94000000000001H149.86V114.4M149.86 108.94000000000001L151.4 107.4" fill="none" stroke="#1f6fbe" stroke-width="0.7" opacity=".55"/><path d="M151.6 108.94000000000001L153.14 107.4H158.6V112.86L157.06 114.4H151.6Z" fill="url(#gB)" stroke="#1f6fbe" stroke-width="1.0" stroke-linejoin="round"/><path d="M151.6 108.94000000000001H157.06V114.4M157.06 108.94000000000001L158.6 107.4" fill="none" stroke="#1f6fbe" stroke-width="0.7" opacity=".55"/><path d="M144.4 115.94000000000001L145.94 114.4H151.4V119.86L149.86 121.4H144.4Z" fill="url(#gB)" stroke="#1f6fbe" stroke-width="1.0" stroke-linejoin="round"/><path d="M144.4 115.94000000000001H149.86V121.4M149.86 115.94000000000001L151.4 114.4" fill="none" stroke="#1f6fbe" stroke-width="0.7" opacity=".55"/><path d="M151.6 115.94000000000001L153.14 114.4H158.6V119.86L157.06 121.4H151.6Z" fill="url(#gB)" stroke="#1f6fbe" stroke-width="1.0" stroke-linejoin="round"/><path d="M151.6 115.94000000000001H157.06V121.4M157.06 115.94000000000001L158.6 114.4" fill="none" stroke="#1f6fbe" stroke-width="0.7" opacity=".55"/><rect x="184.500" y="59" width="21" height="24.800" rx="1.500" fill="#dedede" stroke="#c6c6c6" stroke-width="1"/><path d="M190 60.500C190 56.200 200.500 56.200 200.500 60.500Z" fill="#ececec" stroke="#d0c4bc" stroke-width=".9"/><rect x="188" y="60" width="15" height="3" fill="#cfcfcf"/><path d="M191.500 65.500H203L208.500 71V86.500H191.500Z" fill="#f1f1f1" stroke="#c6c6c6" stroke-width="1"/><path d="M203 65.500V71H208.500" fill="#fafafa" stroke="#c6c6c6" stroke-width=".8"/><path d="M232 58.500L243.300 70M244.500 58.500L233.200 70" stroke="#2a2a2a" stroke-width="1.800" stroke-linecap="round"/><ellipse cx="233" cy="70.8" rx="1.500" ry="2.300" transform="rotate(45 233 70.800)" fill="#fff" stroke="#2a2a2a" stroke-width="1"/><ellipse cx="243.500" cy="70.8" rx="1.500" ry="2.300" transform="rotate(-45 243.500 70.800)" fill="#fff" stroke="#2a2a2a" stroke-width="1"/><circle cx="238.200" cy="64.8" r="1" fill="#ddd"/><path d="M237.500 82.800H230.800V95.500H234" fill="none" stroke="#2b3440" stroke-width="1.100"/><path d="M234.600 84.800H241.800L245.700 88.600V97.500H234.600Z" fill="url(#gG)" stroke="#2b3440" stroke-width="1.100"/><path d="M241.800 84.800V88.600H245.700" fill="#fff" stroke="#2b3440" stroke-width=".8"/><rect x="230.700" y="106.6" width="7" height="9" rx=".8" fill="#f4f6fa" stroke="#2b3440" stroke-width="1.100"/><rect x="232.300" y="108.2" width="3.800" height="2" fill="#3f6db0"/><path d="M232 112.800H236.500" stroke="#2b3440" stroke-width=".8"/><path d="M245.800 107L239 116" stroke="#4a4a4a" stroke-width="1.500"/><path d="M245.800 107L243.500 110" stroke="#d8c070" stroke-width="1.500"/><path d="M240.500 114.200C238 114 236 117 230.800 121.500C236 122 240.500 120 242 116Z" fill="#6b6e74" stroke="#45484e" stroke-width=".7"/><rect x="265.600" y="71.5" width="10" height="10" fill="url(#gB)" stroke="#2268b3" stroke-width="1.100"/><circle cx="265.600" cy="81.6" r="5.300" fill="#fff" stroke="#a3213a" stroke-width="1.100"/><rect x="265.600" y="95.400" width="10" height="10" fill="url(#gB)" stroke="#2268b3" stroke-width="1.100"/><circle cx="265.600" cy="105.5" r="5.300" fill="#a6cff0" stroke="#2268b3" stroke-width="1.100"/><path d="M265.600 100.500V105.500H270.800" stroke="#8fbbe2" stroke-width=".8" fill="none"/><path d="M337.300 71L343 73.200L348 71.500L351 73V83.500L348 85.800L337.300 81.500Z" fill="#b9dcf6" stroke="#2268b3" stroke-width="1.100" stroke-linejoin="round"/><path d="M348 75.500V85.800M337.300 71L348 75.500L351 73" stroke="#2268b3" stroke-width=".9" fill="none"/><path d="M339.500 76.200L345.800 78.500V82.300L339.500 80Z" fill="#5fa3e0" stroke="#2268b3" stroke-width=".9"/><circle cx="339.800" cy="98.1" r="3.500" fill="#fff" stroke="#222" stroke-width="1"/><path d="M337.400 95.700L342.200 100.500M342.200 95.700L337.400 100.500" stroke="#222" stroke-width=".9"/><path d="M337.500 103.200V107.200H341" stroke="#111" stroke-width="1.200" fill="none"/><path d="M340 105.200L342.200 107.200L340 109.200Z" fill="#111"/><path d="M343.500 103L345 101.500H351.500V107.500L350 109.200H343.500Z" fill="url(#gG)" stroke="#2b3440" stroke-width="1" stroke-linejoin="round"/><path d="M343.500 103H350V109.200M350 103L351.500 101.500" stroke="#2b3440" stroke-width=".6" fill="none" opacity=".6"/><path d="M379.300 56V87" stroke="#1f1f1f" stroke-width="1.300"/><rect x="381.400" y="59.4" width="10.800" height="10" fill="url(#gB)" stroke="#2268b3" stroke-width="1.100"/><rect x="381.400" y="72.3" width="26.300" height="12.300" rx=".8" fill="url(#gG)" stroke="#2b3440" stroke-width="1.100"/><path d="M448 70.900H438.700V64.600C438.700 57 424.600 57 424.600 64.600V69.500C424.600 71.500 418.700 71.500 418.700 76.200C418.700 80 420.500 81.900 424 81.900H448" fill="none" stroke="#2d7fd0" stroke-width="1.300"/><path d="M448 73.700H435.800V65C435.800 60.300 427.500 60.300 427.500 65V71.500C427.500 73.700 421.800 73.200 421.800 76.300C421.800 78.300 422.800 79 425 79H448" fill="#fff" stroke="#2b3440" stroke-width="1.200"/><path d="M458.3 59.600H462.8L468.0 64.500V75.500H463.6V83.500H458.3Z" fill="url(#gG)" stroke="#2b3440" stroke-width="1.1" stroke-linejoin="round"/><path d="M471.500 56V85.500" stroke="#3a9a3a" stroke-width="1.600"/><path d="M485 59.600H480.5L475.3 64.500V75.500H479.7V83.500H485Z" fill="#cfe3f5" stroke="#bcd6ee" stroke-width="0.8" stroke-linejoin="round"/><path d="M472.500 69.500V82.200L475.500 79.700L477.600 84.500L479.500 83.700L477.400 79L481.300 78.600Z" fill="#fff" stroke="#2b3440" stroke-width="1" stroke-linejoin="round"/><path d="M497.3 59.600H501.8L507.0 64.500V75.500H502.6V83.500H497.3Z" fill="url(#gG)" stroke="#2b3440" stroke-width="1.1" stroke-linejoin="round"/><path d="M510.500 56V85" stroke="#2d7fd0" stroke-width="1.600"/><path d="M524.5 59.600H520.0L514.8 64.500V75.500H519.2V83.500H524.5Z" fill="#cfe3f5" stroke="#bcd6ee" stroke-width="0.8" stroke-linejoin="round"/><path d="M510.6 85.0L514.9 83.9L512.4 81.0Z" fill="#f3e6c8" stroke="#6b5a3a" stroke-width=".7"/><path d="M514.9 83.9L523.6 76.6L521.2 73.7L512.4 81.0Z" fill="#f4bf2e" stroke="#8a6a14" stroke-width=".8"/><path d="M523.6 76.6L525.5 75.0L523.1 72.0L521.2 73.7Z" fill="#b0762a" stroke="#6b4a14" stroke-width=".8"/><path d="M510.6 85.0l1.0 -0.8" stroke="#333" stroke-width="1.200"/><path d="M394 92.500L399.600 98.800H395.800V103.200H392.200V98.800H388.400ZM394 122L399.600 115.700H395.800V111.300H392.200V115.700H388.400ZM379.400 107.200L385.700 101.600V105.400H390V109H385.700V112.800ZM408.700 107.200L402.400 101.600V105.400H398V109H402.400V112.800Z" fill="#3b3b3b"/><rect x="391.600" y="104.800" width="4.800" height="4.800" fill="#fff" stroke="#3b3b3b" stroke-width="1.100"/><circle cx="424.900" cy="98.7" r="5.400" fill="#e6e6e6" stroke="#2b3440" stroke-width="1.100"/><path d="M433.500 97H439.500C442 97 443.200 98.500 443.200 101" fill="none" stroke="#111" stroke-width="1.300"/><path d="M440.700 100.500H445.700L443.200 104Z" fill="#111"/><circle cx="440.300" cy="115.300" r="5.300" fill="#c4e0f6" stroke="#2268b3" stroke-width="1.100"/><circle cx="435.800" cy="111.700" r="5.600" fill="#b4d6f2" stroke="#2268b3" stroke-width="1.100"/><path d="M466 98.500A11.300 11.300 0 1 0 478.500 99" fill="none" stroke="#3b3b3b" stroke-width="2.700"/><path d="M467 93.200L478 97.600L467.500 102.800Z" fill="#3b3b3b"/><path d="M496.300 99.900H511M496.300 102.700H511M517.400 110V122M520.200 110V122" stroke="#222" stroke-width="1"/><path d="M510 101.300H518.800V111" fill="none" stroke="#86bdf0" stroke-width="3.800"/><path d="M510 101.300H518.800V111" fill="none" stroke="#fff" stroke-width="1"/><path d="M503 95.300H514" stroke="#111" stroke-width="1.100"/><path d="M513 93L516.500 95.300L513 97.600Z" fill="#111"/><path d="M523.500 116V105" stroke="#111" stroke-width="1.100"/><path d="M521.200 106L523.500 102.500L525.800 106Z" fill="#111"/><rect x="537.200" y="63.6" width="6.200" height="6" fill="#a9d2f3" stroke="#2268b3" stroke-width="1.100"/><rect x="546.600" y="63.6" width="6.200" height="6" fill="#a9d2f3" stroke="#2268b3" stroke-width="1.100"/><path d="M543.500 66.600H546.500" stroke="#2268b3" stroke-width="1"/><path d="M545 60.500V72.800" stroke="#c8202a" stroke-width="1.200" stroke-dasharray="1.200 1.200"/><rect x="562.700" y="64" width="4.600" height="5.400" fill="#a9d2f3" stroke="#2268b3" stroke-width="1.100"/><rect x="572.900" y="64" width="4.600" height="5.400" fill="#a9d2f3" stroke="#2268b3" stroke-width="1.100"/><path d="M570.100 60.500V72.800" stroke="#c8202a" stroke-width="1.200" stroke-dasharray="1.200 1.200"/><path d="M567.500 66.700H568.500M571.700 66.700H572.700" stroke="#c8202a" stroke-width="1"/><path d="M587.500 63.500H592M592 60V67M592 61.500H596.500L598.500 60.500V66.800L596.500 65.800H592" fill="none" stroke="#c3c3c3" stroke-width="1"/><path d="M595.500 67.500L602.500 73M602.500 67.500L595.500 73" stroke="#c6c6c6" stroke-width="1.600"/><rect x="537.500" y="82.8" width="6" height="6" fill="#fff" stroke="#2b3440" stroke-width="1.100"/><rect x="546.7" y="82.8" width="6" height="6" fill="#a9d2f3" stroke="#2268b3" stroke-width="1.100"/><rect x="537.5" y="92" width="6" height="6" fill="#a9d2f3" stroke="#2268b3" stroke-width="1.100"/><rect x="546.7" y="92" width="6" height="6" fill="#a9d2f3" stroke="#2268b3" stroke-width="1.100"/><rect x="562.600" y="82.6" width="15" height="15" fill="#f3f3f3" stroke="#d6d6d6" stroke-width="1"/><rect x="562.600" y="89.6" width="8" height="8" fill="#f8f8f8" stroke="#cfcfcf" stroke-width="1"/><path d="M587.500 90.200H592.500" stroke="#2b3440" stroke-width="1.100"/><path d="M592.500 85.500V95M592.500 87.500H597L599.800 86V94.500L597 93H592.500" fill="#fff" stroke="#2b3440" stroke-width="1.100" stroke-linejoin="round"/><path d="M540.500 108.600H547.500" stroke="#111" stroke-width="1.100"/><path d="M546.500 106.300L550 108.600L546.500 110.900Z" fill="#111"/><path d="M537 113.500H545M537 116.500H545" stroke="#222" stroke-width="1"/><path d="M544.500 115H551" stroke="#6fb3ee" stroke-width="3.600"/><path d="M550.500 106V122M553 106V122" stroke="#222" stroke-width="1"/><path d="M566 107.600H573" stroke="#111" stroke-width="1.100"/><path d="M572 105.300L575.500 107.600L572 109.900Z" fill="#111"/><path d="M562 111.500H570M562 114.300H570M562 117.100H570M562 119.900H570" stroke="#222" stroke-width="1"/><path d="M569.500 112.900H576M569.500 118.500H576" stroke="#6fb3ee" stroke-width="3.400"/><path d="M575.500 105.500V122M578 105.500V122" stroke="#222" stroke-width="1"/><path d="M591 110L599.500 118.500M599.500 110L591 118.500" stroke="#c01822" stroke-width="3.600" stroke-linecap="round"/><path d="M591 110L599.500 118.500M599.500 110L591 118.500" stroke="#f2464f" stroke-width="2" stroke-linecap="round"/><path d="M620 66.500H643.500" stroke="#2c3a55" stroke-width="1.500"/><path d="M617 66.500L621.500 63.300V69.700ZM646.200 66.500L641.700 63.300V69.700Z" fill="#2c3a55"/><rect x="617.300" y="74.6" width="28.700" height="4.800" rx=".6" fill="url(#gY)" stroke="#c48a12" stroke-width=".9"/><path d="M620 74.600V76.500M622.500 74.600V76.500M625 74.600V76.500M627.500 74.600V76.500M630 74.600V76.500M632.500 74.600V76.500M635 74.600V76.500M637.500 74.600V76.500M640 74.600V76.500M642.500 74.600V76.500" stroke="#a8740c" stroke-width=".6"/><path d="M621.500 116.500L642.500 96.500" stroke="#222" stroke-width="1.200"/><path d="M619.800 118.200L621.500 112.800L625.200 116.600ZM644.200 94.800L642.500 100.200L638.800 96.400Z" fill="#222"/><path d="M617.500 112.500L626 121.500M638 92L647 100.500" stroke="#222" stroke-width="1.100"/><path d="M677 57H673.500V85.500H677M698 68.500H701.500V85.500H698" fill="none" stroke="#2b3440" stroke-width="1.200"/><circle cx="683.300" cy="68.1" r="6.400" fill="#f4f4f6" stroke="#2b3440" stroke-width="1.100"/><path d="M684.300 71L686.800 68.400H698.600V78.800L696 81.500H684.300Z" fill="url(#gG)" stroke="#2b3440" stroke-width="1.100" stroke-linejoin="round"/><path d="M684.300 71H696V81.500M696 71L698.600 68.400" fill="none" stroke="#2b3440" stroke-width=".7" opacity=".6"/><path d="M698.0 56.5L699.0 59.9L702.1 58.2L700.4 61.3L703.8 62.3L700.4 63.3L702.1 66.4L699.0 64.7L698.0 68.1L697.0 64.7L693.9 66.4L695.6 63.3L692.2 62.3L695.6 61.3L693.9 58.2L697.0 59.9Z" fill="#f58220" stroke="#e0600a" stroke-width=".5"/><circle cx="698" cy="62.3" r="2.300" fill="#ffe45a"/><rect x="672.700" y="93.2" width="6.800" height="6.800" fill="#ececec" stroke="#2b3440" stroke-width="1.100"/><rect x="694.700" y="93.2" width="7" height="6.800" fill="#a9d2f3" stroke="#2268b3" stroke-width="1.100"/><rect x="672.700" y="114.7" width="10.800" height="6.600" fill="#a9d2f3" stroke="#2268b3" stroke-width="1.100"/><path d="M696.200 109.500L701.500 114.800L696.200 120.100L690.900 114.800Z" fill="#a9d2f3" stroke="#2268b3" stroke-width="1.100"/><path d="M682 96.600H690M676 102.500V110M683 102L689.500 108.500" stroke="#111" stroke-width="1.200"/><path d="M689 94.200L692.500 96.600L689 99ZM673.600 109L676 112.500L678.400 109ZM691 110L687 109.400L690.400 106Z" fill="#111"/><rect x="744" y="59.5" width="8.6" height="22.2" rx="0.8" fill="url(#gG)" stroke="#2b3440" stroke-width="1.1"/><rect x="728.3" y="59.5" width="13.4" height="13.4" rx="0.8" fill="url(#gG)" stroke="#2b3440" stroke-width="1.1"/><rect x="728.3" y="75.2" width="18.7" height="8.3" rx="0.8" fill="#f6f6f8" stroke="#2b3440" stroke-width="1.1"/><path d="M742.5 86.3L746.8 85.2L744.3 82.2Z" fill="#f3e6c8" stroke="#6b5a3a" stroke-width=".7"/><path d="M746.8 85.2L756.2 77.3L753.6 74.3L744.3 82.2Z" fill="#f4bf2e" stroke="#8a6a14" stroke-width=".8"/><path d="M756.2 77.3L758.1 75.7L755.5 72.7L753.6 74.3Z" fill="#b0762a" stroke="#6b4a14" stroke-width=".8"/><path d="M742.5 86.3l1.0 -0.8" stroke="#333" stroke-width="1.200"/><path d="M801.500 57.400H795V64M818 57.400H824.500V64M795 80V86.500H801.500" fill="none" stroke="#2b3440" stroke-width="1.300"/><path d="M801.300 66.800L804.600 63.500H818.500V77.200L815.200 80.500H801.300Z" fill="url(#gG)" stroke="#2b3440" stroke-width="1.100" stroke-linejoin="round"/><path d="M801.300 66.800H815.200V80.500M815.200 66.800L818.500 63.500" fill="none" stroke="#2b3440" stroke-width=".7" opacity=".6"/><path d="M801.300 66.800H815.200V80.500H801.300Z" fill="#c9ccd2" opacity=".6"/><path d="M819.300 71.300C817 72.300 816.800 76 819.800 77.200V87.300C819.800 88.800 823.300 88.800 823.300 87.300V77.200C826.300 76 826.100 72.300 823.800 71.300V74.500H819.300Z" fill="#eef0f4" stroke="#2b3440" stroke-width="1" stroke-linejoin="round"/><path d="M881.300 64L902.600 59.300V81L881.300 85.700Z" fill="#dde2ea" stroke="#2b3440" stroke-width="1.200" stroke-linejoin="round"/><path d="M888.400 62.400V84.100M895.500 60.800V82.600M881.300 71.200L902.600 66.500M881.300 78.400L902.600 73.700" stroke="#2b3440" stroke-width="1"/><path d="M894.3 85.5L898.5 84.2L895.9 81.4Z" fill="#f3e6c8" stroke="#6b5a3a" stroke-width=".7"/><path d="M898.5 84.2L907.7 75.6L905.1 72.8L895.9 81.4Z" fill="#f4bf2e" stroke="#8a6a14" stroke-width=".8"/><path d="M907.7 75.6L909.5 73.9L906.9 71.1L905.1 72.8Z" fill="#b0762a" stroke="#6b4a14" stroke-width=".8"/><path d="M894.3 85.5l0.9 -0.9" stroke="#333" stroke-width="1.200"/><path d="M960.600 66H967V86.500H960.600Z" fill="#dcdcdc" stroke="#cfcfcf" stroke-width=".8"/><path d="M960.600 66L968.500 57.500H974.500L967 66Z" fill="#e9e9e9" stroke="#d2d2d2" stroke-width=".8"/><path d="M967 66L974.500 57.500V78L967 86.500Z" fill="#c6c6c6" stroke="#c0c0c0" stroke-width=".8"/><path d="M979 72.200H973.500" stroke="#b4b4b4" stroke-width="1.200"/><path d="M974.500 69.800L971.800 72.200L974.500 74.600Z" fill="#b4b4b4"/><path d="M980.500 68L983 65.500H989.800V77L987.300 79.700H980.500Z" fill="#f2f2f2" stroke="#d6d6d6" stroke-width="1" stroke-linejoin="round"/><path d="M980.500 68H987.300V79.700M987.300 68L989.800 65.500" fill="none" stroke="#dcdcdc" stroke-width=".7"/><path d="M1013.300 78.500L1019.800 75.500L1026.300 78.500V84L1019.800 86L1013.300 84Z" fill="none" stroke="#9db2cb" stroke-width="1.100" stroke-linejoin="round"/><path d="M1013.300 78.500L1019.800 81.500L1026.300 78.500" fill="none" stroke="#9db2cb" stroke-width="1"/><circle cx="1019.800" cy="76.300" r="2.900" fill="#cfe2f7" stroke="#9db2cb" stroke-width="1.100"/><path d="M1020.100 93.700L1027.600 101L1020.100 108.300L1012.600 101Z" fill="#fafafa" stroke="#cdcdcd" stroke-width="1"/><circle cx="1020.100" cy="99.800" r="2.200" fill="none" stroke="#cfcfcf" stroke-width=".9"/><path d="M1020.100 102V105.500" stroke="#cfcfcf" stroke-width=".9"/><path d="M1161.500 62.800H1183V82.500H1160" fill="url(#gW)" stroke="#2b3440" stroke-width="1.100"/><path d="M1155.200 62C1155.200 58.300 1161.800 58.300 1161.800 62V79C1161.800 83.500 1155.200 83.500 1155.200 79Z" fill="#f4f5f8" stroke="#2b3440" stroke-width="1.100"/><path d="M1155.200 78.500C1156 76.500 1161 76.500 1161.800 78.500" fill="none" stroke="#2b3440" stroke-width=".8"/><path d="M1172.400 69.800L1178.600 76.300H1175.200V84.500H1169.600V76.300H1166.200Z" fill="#3d9bf0" stroke="#1660b8" stroke-width="1" stroke-linejoin="round"/></svg><svg class="a" style="left:553px;top:174px" width="810" height="818" viewBox="553 174 810 818"><path d="M945.5 224.700V992" stroke="#1f7f29" stroke-width="1.200" stroke-dasharray="10.500 7.500" fill="none"/><path d="M553.500 638.4H1363" stroke="#1f7f29" stroke-width="1.200" stroke-dasharray="9.400 8.600" fill="none"/><path d="M-61.7 -247.2C-60.1 -246.1 -55.6 -243.8 -52.1 -240.5C-48.6 -237.2 -44.3 -232.4 -40.8 -227.6C-37.3 -222.8 -33.8 -216.8 -31.1 -211.4C-28.4 -206.0 -26.2 -200.4 -24.6 -195.3C-23.0 -190.2 -22.2 -185.4 -21.7 -180.8C-21.1 -176.2 -21.2 -172.8 -21.3 -167.9C-21.4 -163.1 -22.0 -154.4 -22.1 -151.7L-10.500 -155.400L-29.500 -105.800L-43.800 -143.400L-29.8 -148.6C-30.0 -151.0 -30.4 -158.4 -31.1 -163.0C-31.9 -167.6 -32.7 -171.3 -34.3 -175.9C-35.9 -180.5 -38.4 -186.2 -40.8 -190.5C-43.2 -194.8 -45.6 -198.2 -48.8 -201.7C-52.0 -205.2 -56.1 -208.6 -60.1 -211.4C-64.1 -214.2 -68.6 -216.6 -73.0 -218.7C-77.4 -220.8 -84.4 -223.2 -86.7 -224.1Z" fill="#1a3c9c" transform="translate(945.5 638.4) rotate(0) scale(1 1)"/><path d="M-61.7 -247.2C-60.1 -246.1 -55.6 -243.8 -52.1 -240.5C-48.6 -237.2 -44.3 -232.4 -40.8 -227.6C-37.3 -222.8 -33.8 -216.8 -31.1 -211.4C-28.4 -206.0 -26.2 -200.4 -24.6 -195.3C-23.0 -190.2 -22.2 -185.4 -21.7 -180.8C-21.1 -176.2 -21.2 -172.8 -21.3 -167.9C-21.4 -163.1 -22.0 -154.4 -22.1 -151.7L-10.500 -155.400L-29.500 -105.800L-43.800 -143.400L-29.8 -148.6C-30.0 -151.0 -30.4 -158.4 -31.1 -163.0C-31.9 -167.6 -32.7 -171.3 -34.3 -175.9C-35.9 -180.5 -38.4 -186.2 -40.8 -190.5C-43.2 -194.8 -45.6 -198.2 -48.8 -201.7C-52.0 -205.2 -56.1 -208.6 -60.1 -211.4C-64.1 -214.2 -68.6 -216.6 -73.0 -218.7C-77.4 -220.8 -84.4 -223.2 -86.7 -224.1Z" fill="#1a3c9c" transform="translate(945.5 638.4) rotate(0) scale(-1 1)"/><path d="M-61.7 -247.2C-60.1 -246.1 -55.6 -243.8 -52.1 -240.5C-48.6 -237.2 -44.3 -232.4 -40.8 -227.6C-37.3 -222.8 -33.8 -216.8 -31.1 -211.4C-28.4 -206.0 -26.2 -200.4 -24.6 -195.3C-23.0 -190.2 -22.2 -185.4 -21.7 -180.8C-21.1 -176.2 -21.2 -172.8 -21.3 -167.9C-21.4 -163.1 -22.0 -154.4 -22.1 -151.7L-10.500 -155.400L-29.500 -105.800L-43.800 -143.400L-29.8 -148.6C-30.0 -151.0 -30.4 -158.4 -31.1 -163.0C-31.9 -167.6 -32.7 -171.3 -34.3 -175.9C-35.9 -180.5 -38.4 -186.2 -40.8 -190.5C-43.2 -194.8 -45.6 -198.2 -48.8 -201.7C-52.0 -205.2 -56.1 -208.6 -60.1 -211.4C-64.1 -214.2 -68.6 -216.6 -73.0 -218.7C-77.4 -220.8 -84.4 -223.2 -86.7 -224.1Z" fill="#ffffff" transform="translate(945.5 638.4) rotate(90) scale(1 1)"/><path d="M-61.7 -247.2C-60.1 -246.1 -55.6 -243.8 -52.1 -240.5C-48.6 -237.2 -44.3 -232.4 -40.8 -227.6C-37.3 -222.8 -33.8 -216.8 -31.1 -211.4C-28.4 -206.0 -26.2 -200.4 -24.6 -195.3C-23.0 -190.2 -22.2 -185.4 -21.7 -180.8C-21.1 -176.2 -21.2 -172.8 -21.3 -167.9C-21.4 -163.1 -22.0 -154.4 -22.1 -151.7L-10.500 -155.400L-29.500 -105.800L-43.800 -143.400L-29.8 -148.6C-30.0 -151.0 -30.4 -158.4 -31.1 -163.0C-31.9 -167.6 -32.7 -171.3 -34.3 -175.9C-35.9 -180.5 -38.4 -186.2 -40.8 -190.5C-43.2 -194.8 -45.6 -198.2 -48.8 -201.7C-52.0 -205.2 -56.1 -208.6 -60.1 -211.4C-64.1 -214.2 -68.6 -216.6 -73.0 -218.7C-77.4 -220.8 -84.4 -223.2 -86.7 -224.1Z" fill="#ffffff" transform="translate(945.5 638.4) rotate(90) scale(-1 1)"/><path d="M-61.7 -247.2C-60.1 -246.1 -55.6 -243.8 -52.1 -240.5C-48.6 -237.2 -44.3 -232.4 -40.8 -227.6C-37.3 -222.8 -33.8 -216.8 -31.1 -211.4C-28.4 -206.0 -26.2 -200.4 -24.6 -195.3C-23.0 -190.2 -22.2 -185.4 -21.7 -180.8C-21.1 -176.2 -21.2 -172.8 -21.3 -167.9C-21.4 -163.1 -22.0 -154.4 -22.1 -151.7L-10.500 -155.400L-29.500 -105.800L-43.800 -143.400L-29.8 -148.6C-30.0 -151.0 -30.4 -158.4 -31.1 -163.0C-31.9 -167.6 -32.7 -171.3 -34.3 -175.9C-35.9 -180.5 -38.4 -186.2 -40.8 -190.5C-43.2 -194.8 -45.6 -198.2 -48.8 -201.7C-52.0 -205.2 -56.1 -208.6 -60.1 -211.4C-64.1 -214.2 -68.6 -216.6 -73.0 -218.7C-77.4 -220.8 -84.4 -223.2 -86.7 -224.1Z" fill="#ffffff" transform="translate(945.5 638.4) rotate(180) scale(1 1)"/><path d="M-61.7 -247.2C-60.1 -246.1 -55.6 -243.8 -52.1 -240.5C-48.6 -237.2 -44.3 -232.4 -40.8 -227.6C-37.3 -222.8 -33.8 -216.8 -31.1 -211.4C-28.4 -206.0 -26.2 -200.4 -24.6 -195.3C-23.0 -190.2 -22.2 -185.4 -21.7 -180.8C-21.1 -176.2 -21.2 -172.8 -21.3 -167.9C-21.4 -163.1 -22.0 -154.4 -22.1 -151.7L-10.500 -155.400L-29.500 -105.800L-43.800 -143.400L-29.8 -148.6C-30.0 -151.0 -30.4 -158.4 -31.1 -163.0C-31.9 -167.6 -32.7 -171.3 -34.3 -175.9C-35.9 -180.5 -38.4 -186.2 -40.8 -190.5C-43.2 -194.8 -45.6 -198.2 -48.8 -201.7C-52.0 -205.2 -56.1 -208.6 -60.1 -211.4C-64.1 -214.2 -68.6 -216.6 -73.0 -218.7C-77.4 -220.8 -84.4 -223.2 -86.7 -224.1Z" fill="#ffffff" transform="translate(945.5 638.4) rotate(180) scale(-1 1)"/><path d="M-61.7 -247.2C-60.1 -246.1 -55.6 -243.8 -52.1 -240.5C-48.6 -237.2 -44.3 -232.4 -40.8 -227.6C-37.3 -222.8 -33.8 -216.8 -31.1 -211.4C-28.4 -206.0 -26.2 -200.4 -24.6 -195.3C-23.0 -190.2 -22.2 -185.4 -21.7 -180.8C-21.1 -176.2 -21.2 -172.8 -21.3 -167.9C-21.4 -163.1 -22.0 -154.4 -22.1 -151.7L-10.500 -155.400L-29.500 -105.800L-43.800 -143.400L-29.8 -148.6C-30.0 -151.0 -30.4 -158.4 -31.1 -163.0C-31.9 -167.6 -32.7 -171.3 -34.3 -175.9C-35.9 -180.5 -38.4 -186.2 -40.8 -190.5C-43.2 -194.8 -45.6 -198.2 -48.8 -201.7C-52.0 -205.2 -56.1 -208.6 -60.1 -211.4C-64.1 -214.2 -68.6 -216.6 -73.0 -218.7C-77.4 -220.8 -84.4 -223.2 -86.7 -224.1Z" fill="#ffffff" transform="translate(945.5 638.4) rotate(270) scale(1 1)"/><path d="M-61.7 -247.2C-60.1 -246.1 -55.6 -243.8 -52.1 -240.5C-48.6 -237.2 -44.3 -232.4 -40.8 -227.6C-37.3 -222.8 -33.8 -216.8 -31.1 -211.4C-28.4 -206.0 -26.2 -200.4 -24.6 -195.3C-23.0 -190.2 -22.2 -185.4 -21.7 -180.8C-21.1 -176.2 -21.2 -172.8 -21.3 -167.9C-21.4 -163.1 -22.0 -154.4 -22.1 -151.7L-10.500 -155.400L-29.500 -105.800L-43.800 -143.400L-29.8 -148.6C-30.0 -151.0 -30.4 -158.4 -31.1 -163.0C-31.9 -167.6 -32.7 -171.3 -34.3 -175.9C-35.9 -180.5 -38.4 -186.2 -40.8 -190.5C-43.2 -194.8 -45.6 -198.2 -48.8 -201.7C-52.0 -205.2 -56.1 -208.6 -60.1 -211.4C-64.1 -214.2 -68.6 -216.6 -73.0 -218.7C-77.4 -220.8 -84.4 -223.2 -86.7 -224.1Z" fill="#ffffff" transform="translate(945.5 638.4) rotate(270) scale(-1 1)"/><rect x="864.300" y="557.2" width="162.400" height="163" fill="#000" stroke="#fff" stroke-width="1.100"/><rect x="868.500" y="562" width="154.500" height="154" fill="none" stroke="#d4d4d4" stroke-width="1.600"/><path d="M945.5 551V566M945.5 615.500V630.500M945.5 646.500V661M945.5 711V728" stroke="#1f7f29" stroke-width="1.200" fill="none"/><path d="M861 638.4H873M921.500 638.4H939M951 638.4H968M1018 638.4H1031" stroke="#1f7f29" stroke-width="1.200" fill="none"/><circle cx="945.5" cy="638.4" r="72.3" fill="none" stroke="#fff" stroke-width="1.100"/><circle cx="945.5" cy="638.4" r="23.3" fill="none" stroke="#fff" stroke-width="1.100"/><path d="M945.0 615.1L944.6 567.1M946.0 615.1L946.4 567.1M948.7 615.3L955.8 567.8M949.6 615.5L957.5 568.1M952.3 616.1L966.7 570.3M953.1 616.4L968.3 570.9M955.7 617.4L977.1 574.5M956.5 617.8L978.6 575.3M958.8 619.3L986.7 580.2M959.6 619.8L988.1 581.2M961.7 621.6L995.3 587.4M962.3 622.2L996.5 588.6M964.1 624.3L1002.7 595.8M964.6 625.1L1003.7 597.2M966.1 627.4L1008.6 605.3M966.5 628.2L1009.4 606.8M967.5 630.8L1013.0 615.6M967.8 631.6L1013.6 617.2M968.4 634.3L1015.8 626.4M968.6 635.2L1016.1 628.1M968.8 637.9L1016.8 637.5M968.8 638.9L1016.8 639.2M968.6 641.6L1016.1 648.7M968.4 642.5L1015.8 650.4M967.8 645.2L1013.6 659.6M967.5 646.0L1013.0 661.2M966.5 648.6L1009.4 670.0M966.1 649.4L1008.6 671.5M964.6 651.7L1003.7 679.6M964.1 652.5L1002.7 681.0M962.3 654.6L996.5 688.2M961.7 655.2L995.3 689.4M959.6 657.0L988.1 695.6M958.8 657.5L986.7 696.6M956.5 659.0L978.6 701.5M955.7 659.4L977.1 702.3M953.1 660.4L968.3 705.9M952.3 660.7L966.7 706.5M949.6 661.3L957.5 708.7M948.7 661.5L955.8 709.0M946.0 661.7L946.4 709.7M945.0 661.7L944.6 709.7M942.3 661.5L935.2 709.0M941.4 661.3L933.5 708.7M938.7 660.7L924.3 706.5M937.9 660.4L922.7 705.9M935.3 659.4L913.9 702.3M934.5 659.0L912.4 701.5M932.2 657.5L904.3 696.6M931.4 657.0L902.9 695.6M929.3 655.2L895.7 689.4M928.7 654.6L894.5 688.2M926.9 652.5L888.3 681.0M926.4 651.7L887.3 679.6M924.9 649.4L882.4 671.5M924.5 648.6L881.6 670.0M923.5 646.0L878.0 661.2M923.2 645.2L877.4 659.6M922.6 642.5L875.2 650.4M922.4 641.6L874.9 648.7M922.2 638.9L874.2 639.2M922.2 637.9L874.2 637.5M922.4 635.2L874.9 628.1M922.6 634.3L875.2 626.4M923.2 631.6L877.4 617.2M923.5 630.8L878.0 615.6M924.5 628.2L881.6 606.8M924.9 627.4L882.4 605.3M926.4 625.1L887.3 597.2M926.9 624.3L888.3 595.8M928.7 622.2L894.5 588.6M929.3 621.6L895.7 587.4M931.4 619.8L902.9 581.2M932.2 619.3L904.3 580.2M934.5 617.8L912.4 575.3M935.3 617.4L913.9 574.5M937.9 616.4L922.7 570.9M938.7 616.1L924.3 570.3M941.4 615.5L933.5 568.1M942.3 615.3L935.2 567.8" stroke="#fff" stroke-width="1.250" fill="none"/><circle cx="945.5" cy="638.4" r="70.1" fill="none" stroke="#fff" stroke-width=".7" opacity=".8"/><circle cx="945.5" cy="638.4" r="24.6" fill="none" stroke="#fff" stroke-width=".7" opacity=".8"/><path d="M945.5 638.4L975.500 668.500" stroke="#d8d8d8" stroke-width="1.200"/><circle cx="945.5" cy="638.4" r="1.900" fill="#fff"/><rect x="972.500" y="670.5" width="12" height="9.500" rx="1" fill="#f4b48c"/><path d="M975 671V668.500A3.500 3.500 0 0 1 982 668.500V671" stroke="#f7c08a" stroke-width="2" fill="none"/><rect x="1022" y="605.2" width="11.600" height="67.300" fill="#101010"/><rect x="1022" y="605.2" width="11.600" height="3.200" fill="#d8d8d8"/><rect x="1022" y="669.2" width="11.600" height="3.300" fill="#d8d8d8"/><path d="M1022 609.5H1033.500M1022 615.4H1033.500M1022 621.3H1033.500M1022 627.2H1033.500M1022 633.1H1033.500M1022 639.0H1033.500M1022 644.9H1033.500M1022 650.8H1033.500M1022 656.7H1033.500M1022 662.6H1033.500M1022 668.5H1033.500" stroke="#ececec" stroke-width="1" fill="none" shape-rendering="crispEdges"/><path d="M1022.800 605V673M1026.800 605V673" stroke="#e0e0e0" stroke-width="1.100"/><path d="M1033.600 612V672" stroke="#1f8a2c" stroke-width="1.200"/><path d="M1011 606L1043.800 667" stroke="#bdbdbd" stroke-width="1"/><path d="M1034.500 638.500H1067" stroke="#1226c8" stroke-width="1.400"/><path d="M1060.500 636.500L1066 638.500L1060.500 640.500Z" fill="#1a30d8"/><path d="M1033 615.300H1052.500" stroke="#1226c8" stroke-width="2.200" stroke-dasharray="2.600 .8" opacity=".85"/><path d="M830.600 533.1V638.600M825.500 533.1H851M826.500 638.600H835" stroke="#7f9fe2" stroke-width="1.100" fill="none"/><path d="M827.500 530L834 536.500M827.500 635.400L834 641.900" stroke="#7f9fe2" stroke-width="1"/><ellipse cx="840.300" cy="533.2" rx="2.800" ry="1.700" fill="#4f7fd0"/><ellipse cx="826.800" cy="638.6" rx="2.800" ry="1.900" fill="#4f7fd0"/><text transform="translate(825.300 599.5) rotate(-90)" font-family="Liberation Sans, sans-serif" font-size="14.600" fill="#e9b652" textLength="30.800" lengthAdjust="spacingAndGlyphs">390.C</text><path d="M832.400 585.300H846M832.400 582.2V592M846 582.200V592" stroke="#e9b652" stroke-width="1.200" fill="none"/><path d="M901.800 418.600L945.300 461.200" stroke="#fff" stroke-width="1.300"/><path d="M884 411.400L890.400 401.200L898.300 400.700L892 412.900Z" fill="none" stroke="#f7bf66" stroke-width="3.100" stroke-linejoin="miter"/><rect x="896" y="411.300" width="5.800" height="7.600" fill="#f7bf66"/><rect x="898.300" y="413.500" width="1.600" height="1.600" fill="#3a2a10"/></svg>
</body></html>
